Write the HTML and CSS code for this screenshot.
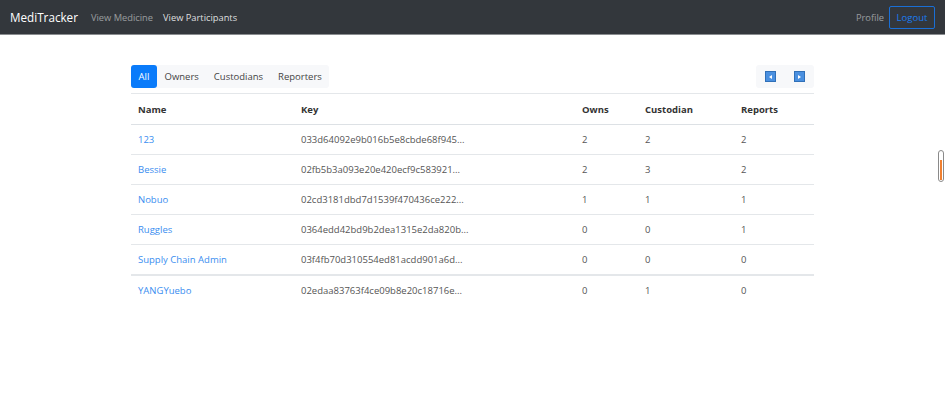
FILE: index.html
```html
<!DOCTYPE html>
<html lang="en">
<head>
<meta charset="utf-8">
<title>MediTracker</title>
<link rel="stylesheet" href="styles.css">
</head>
<body>
<nav class="navbar">
  <div class="nav-left">
    <span class="brand">MediTracker</span>
    <a class="nav-link">View Medicine</a>
    <a class="nav-link active">View Participants</a>
  </div>
  <div class="nav-right">
    <a class="nav-link">Profile</a>
    <button class="btn-logout">Logout</button>
  </div>
</nav>
<main class="container">
  <div class="toolbar">
    <div class="tabs">
      <span class="tab active">All</span>
      <span class="tab">Owners</span>
      <span class="tab">Custodians</span>
      <span class="tab">Reporters</span>
    </div>
    <div class="pager">
      <span class="pg-btn"><span class="tri left"></span></span>
      <span class="pg-btn"><span class="tri right"></span></span>
    </div>
  </div>
  <table class="table">
    <thead>
      <tr><th class="c-name">Name</th><th class="c-key">Key</th><th class="c-owns">Owns</th><th class="c-cust">Custodian</th><th>Reports</th></tr>
    </thead>
    <tbody>
      <tr><td><a>123</a></td><td>033d64092e9b016b5e8cbde68f945...</td><td>2</td><td>2</td><td>2</td></tr>
      <tr><td><a>Bessie</a></td><td>02fb5b3a093e20e420ecf9c583921...</td><td>2</td><td>3</td><td>2</td></tr>
      <tr><td><a>Nobuo</a></td><td>02cd3181dbd7d1539f470436ce222...</td><td>1</td><td>1</td><td>1</td></tr>
      <tr><td><a>Ruggles</a></td><td>0364edd42bd9b2dea1315e2da820b...</td><td>0</td><td>0</td><td>1</td></tr>
      <tr class="thick"><td><a>Supply Chain Admin</a></td><td>03f4fb70d310554ed81acdd901a6d...</td><td>0</td><td>0</td><td>0</td></tr>
      <tr><td><a>YANGYuebo</a></td><td>02edaa83763f4ce09b8e20c18716e...</td><td>0</td><td>1</td><td>0</td></tr>
    </tbody>
  </table>
</main>
<div class="side-widget"><span class="side-fill"></span></div>
</body>
</html>
```
FILE: styles.css
```css
* { box-sizing: border-box; }
html, body { margin: 0; padding: 0; background: #fff; }
body {
  font-family: "Open Sans", "Noto Sans", "Liberation Sans", sans-serif;
  color: #444;
  width: 945px;
  height: 409px;
  overflow: hidden;
  position: relative;
}
.navbar {
  height: 35px;
  background: #33373c;
  border-bottom: 1px solid #8a8d90;
  display: flex;
  align-items: center;
  justify-content: space-between;
  padding: 0 10px 0 10px;
}
.nav-left, .nav-right { display: flex; align-items: center; }
.brand {
  color: #fff;
  font-size: 11.7px;
  margin-right: 13px;
}
.nav-link {
  color: rgba(255,255,255,0.5);
  font-size: 9.3px;
  margin-right: 10px;
}
.nav-link.active { color: rgba(255,255,255,0.85); }
.nav-right .nav-link { margin-right: 5px; }
.btn-logout {
  font-family: inherit;
  font-size: 9.5px;
  color: #1a7cf0;
  background: transparent;
  border: 1px solid #1a6fd6;
  border-radius: 2px;
  height: 23px;
  width: 46px;
  padding: 0;
}
.container {
  width: 683px;
  margin: 30px auto 0;
}
.toolbar {
  display: flex;
  justify-content: space-between;
  align-items: center;
  height: 23px;
  margin-bottom: 5px;
}
.tabs {
  display: flex;
  background: #f7f8fa;
  height: 23px;
  border-radius: 3px;
}
.tab {
  font-size: 9.5px;
  color: #444;
  padding: 0 7.5px;
  line-height: 23px;
  height: 23px;
  border-radius: 3px;
}
.tab.active {
  background: #0a7bfa;
  color: #fff;
  width: 26px;
  padding: 0;
  text-align: center;
}
.pager {
  display: flex;
  align-items: center;
  justify-content: space-between;
  width: 58px;
  height: 23px;
  background: #f7f8fa;
  padding: 0 9px;
  border-radius: 3px;
}
.pg-btn {
  width: 11px;
  height: 11px;
  background: #4a90e0;
  border: 1px solid #3070b8;
  display: flex;
  align-items: center;
  justify-content: center;
}
.tri { width: 0; height: 0; border-top: 2.5px solid transparent; border-bottom: 2.5px solid transparent; }
.tri.left { border-right: 3px solid #fff; }
.tri.right { border-left: 3px solid #fff; }
.table {
  width: 100%;
  border-collapse: collapse;
  font-size: 9.5px;
}
.table th, .table td {
  text-align: left;
  padding: 0 7px;
  height: 30px;
  border-top: 1px solid #e4e7ea;
}
.table th {
  font-weight: 700;
  color: #333;
  border-bottom: 1px solid #dde1e5;
  height: 31px;
}
.table td { color: #555; }
.table tr.thick td { border-bottom: 2px solid #e4e7ea; }
.c-name { width: 163px; }
.c-key { width: 281px; }
.c-owns { width: 63px; }
.c-cust { width: 96px; }
.table a { color: #3a8ef0; text-decoration: none; }
.side-widget {
  position: absolute;
  left: 938px;
  top: 150px;
  width: 6px;
  height: 32px;
  border: 1px solid #8a8a8a;
  border-radius: 3px;
  background: #fff;
  display: flex;
  flex-direction: column;
  justify-content: flex-end;
  padding: 1px;
}
.side-fill { display: block; height: 70%; background: #f08030; }
```
